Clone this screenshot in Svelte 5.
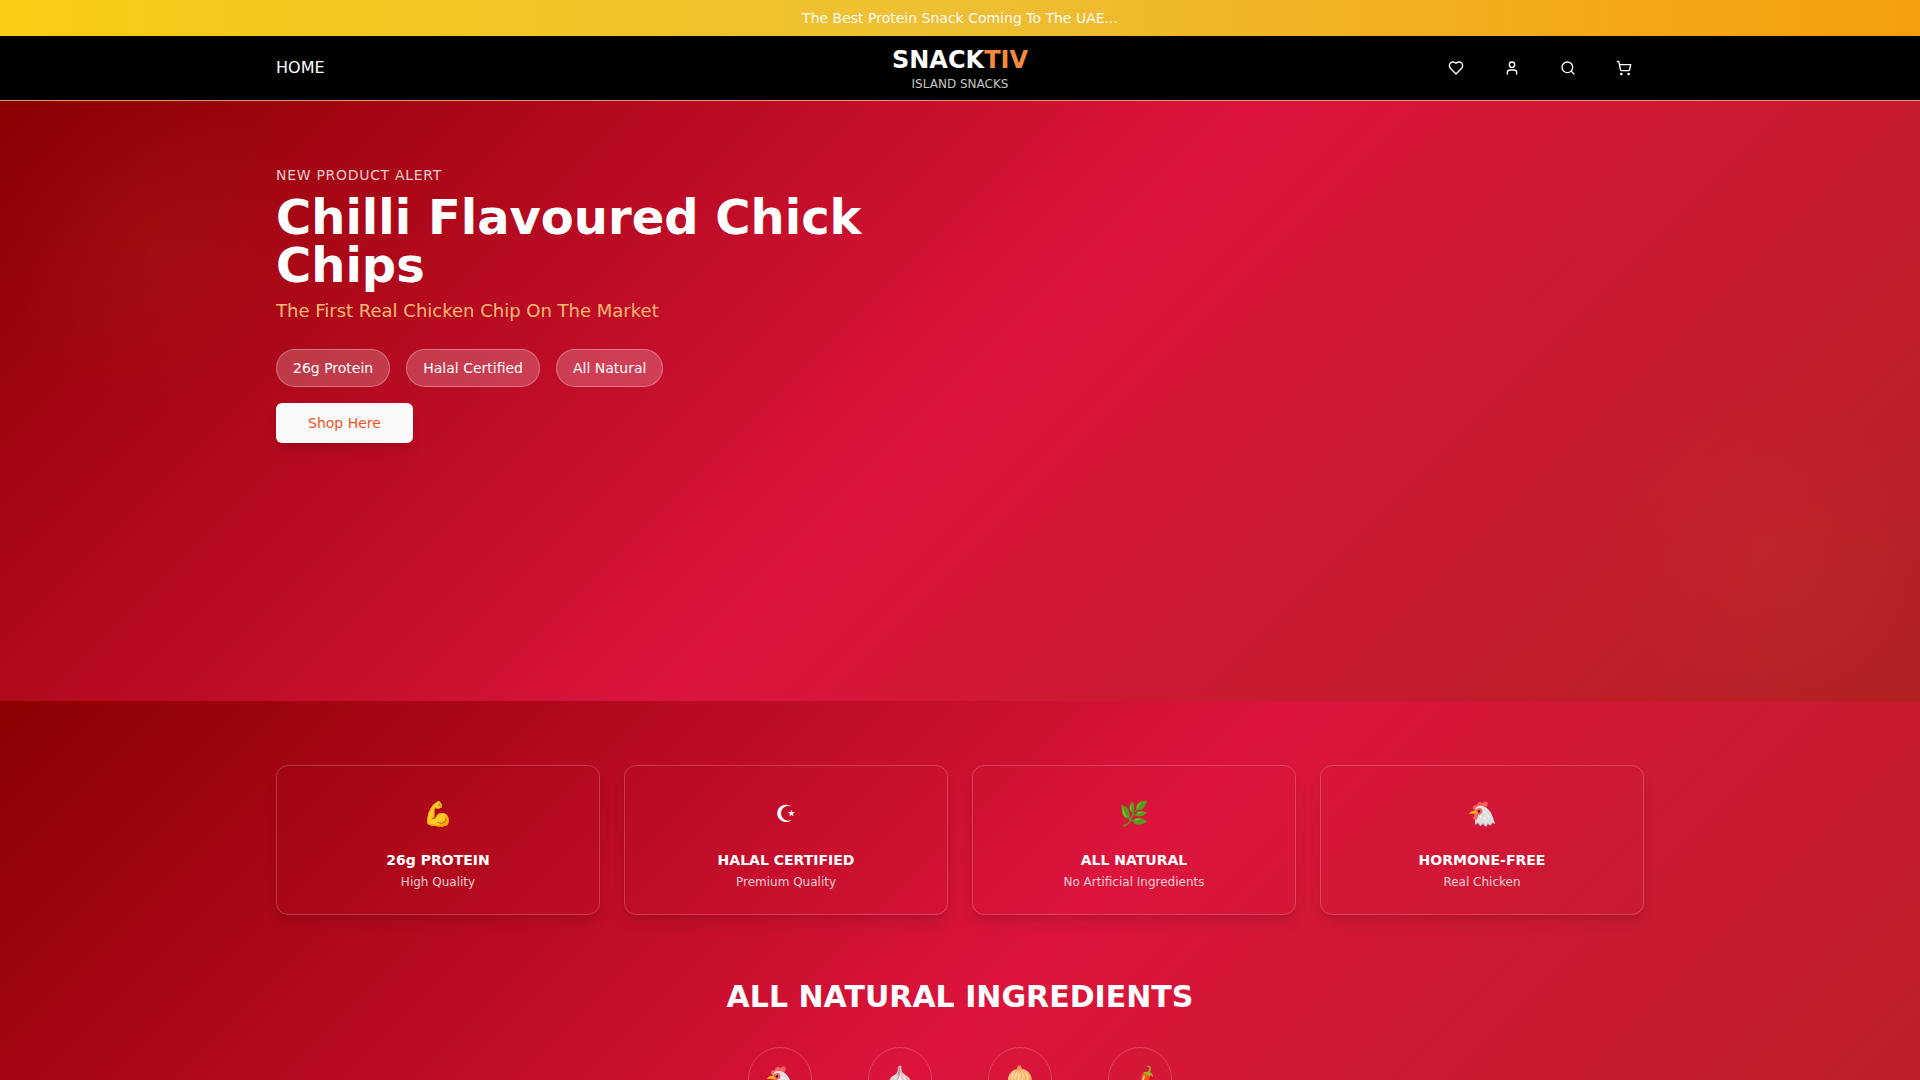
<script lang="ts">
    type Card = {
        icon: string;
        title: string;
        text: string;
    };

    const badges: string[] = ['26g Protein', 'Halal Certified', 'All Natural'];

    const features: Card[] = [
        { icon: '💪', title: '26g PROTEIN', text: 'High Quality' },
        { icon: '☪', title: 'HALAL CERTIFIED', text: 'Premium Quality' },
        { icon: '🌿', title: 'ALL NATURAL', text: 'No Artificial Ingredients' },
        { icon: '🐔', title: 'HORMONE-FREE', text: 'Real Chicken' }
    ];

    const ingredients: string[] = ['🐔', '🧄', '🧅', '🌶️'];
</script>

<div class="page">
    <div class="announcement">The Best Protein Snack Coming To The UAE...</div>

    <header class="header">
        <div class="container header-row">
            <nav>
                <a class="nav-link" href="/">HOME</a>
            </nav>

            <a class="logo" href="/">
                <span class="logo-name">SNACK<span class="logo-accent">TIV</span></span>
                <span class="logo-tag">ISLAND SNACKS</span>
            </a>

            <div class="actions">
                <button class="icon-button" type="button" aria-label="Wishlist">
                    <svg viewBox="0 0 24 24">
                        <path d="M19 14c1.49-1.46 3-3.21 3-5.5A5.5 5.5 0 0 0 16.5 3c-1.76 0-3 .5-4.5 2-1.5-1.5-2.74-2-4.5-2A5.5 5.5 0 0 0 2 8.5c0 2.3 1.5 4.05 3 5.5l7 7Z" />
                    </svg>
                </button>
                <button class="icon-button" type="button" aria-label="Account">
                    <svg viewBox="0 0 24 24">
                        <path d="M19 21v-2a4 4 0 0 0-4-4H9a4 4 0 0 0-4 4v2" />
                        <circle cx="12" cy="7" r="4" />
                    </svg>
                </button>
                <button class="icon-button" type="button" aria-label="Search">
                    <svg viewBox="0 0 24 24">
                        <circle cx="11" cy="11" r="8" />
                        <path d="m21 21-4.3-4.3" />
                    </svg>
                </button>
                <button class="icon-button" type="button" aria-label="Cart">
                    <svg viewBox="0 0 24 24">
                        <circle cx="8" cy="21" r="1" />
                        <circle cx="19" cy="21" r="1" />
                        <path d="M2.05 2.05h2l2.66 12.42a2 2 0 0 0 2 1.58h9.78a2 2 0 0 0 1.95-1.57l1.65-7.43H5.12" />
                    </svg>
                </button>
            </div>
        </div>
    </header>

    <main>
        <section class="hero">
            <div class="container">
                <div class="hero-content">
                    <p class="eyebrow">NEW PRODUCT ALERT</p>
                    <h1>Chilli Flavoured Chick Chips</h1>
                    <p class="subtitle">The First Real Chicken Chip On The Market</p>
                    <div class="badges">
                        {#each badges as badge}
                            <span class="badge">{badge}</span>
                        {/each}
                    </div>
                    <button class="shop-button" type="button">Shop Here</button>
                </div>
            </div>
        </section>

        <section class="features">
            <div class="container">
                <div class="feature-grid">
                    {#each features as feature}
                        <div class="feature-card">
                            <div class="feature-icon">{feature.icon}</div>
                            <h3>{feature.title}</h3>
                            <p>{feature.text}</p>
                        </div>
                    {/each}
                </div>

                <h2>ALL NATURAL INGREDIENTS</h2>
                <div class="ingredient-grid">
                    {#each ingredients as ingredient}
                        <div class="ingredient">{ingredient}</div>
                    {/each}
                </div>
            </div>
        </section>
    </main>
</div>

<style>
    :global(body) {
        margin: 0;
        background: #8b0000;
    }

    .page {
        --spice: linear-gradient(135deg, #8b0000 0%, #dc143c 50%, #b22222 100%);
        color: #fff;
        font-family: "DejaVu Sans", sans-serif;
        font-size: 16px;
        line-height: 24px;
    }

    .page :is(h1, h2, h3, p) {
        margin: 0;
    }

    button {
        font-family: inherit;
        border: 0;
        cursor: pointer;
    }

    .container {
        box-sizing: border-box;
        max-width: 1400px;
        margin: 0 auto;
        padding: 0 16px;
    }

    .announcement {
        padding: 8px 16px;
        background: linear-gradient(90deg, #facc15, #eebf33, #f59e0b);
        color: #fafafa;
        font-size: 14px;
        line-height: 20px;
        text-align: center;
    }

    /* Header */
    .header {
        background: #000;
        border-bottom: 1px solid #dc9a72;
    }

    .header-row {
        display: grid;
        grid-template-columns: 1fr auto 1fr;
        align-items: center;
        min-height: 64px;
    }

    .nav-link {
        color: #fff;
        text-decoration: none;
    }

    .logo {
        display: flex;
        flex-direction: column;
        align-items: center;
        color: #fff;
        text-decoration: none;
    }

    .logo-name {
        font-size: 24px;
        font-weight: bold;
        line-height: 32px;
    }

    .logo-accent {
        color: #f58a3c;
    }

    .logo-tag {
        color: #c4c4c4;
        font-size: 12px;
        line-height: 16px;
    }

    .actions {
        display: flex;
        justify-content: flex-end;
        gap: 16px;
    }

    .icon-button {
        display: flex;
        align-items: center;
        justify-content: center;
        width: 40px;
        height: 40px;
        padding: 0;
        background: transparent;
        color: #fff;
    }

    .icon-button svg {
        width: 16px;
        height: 16px;
        fill: none;
        stroke: currentColor;
        stroke-width: 2;
        stroke-linecap: round;
        stroke-linejoin: round;
    }

    /* Hero */
    .hero {
        box-sizing: border-box;
        min-height: 600px;
        padding: 64px 0;
        background:
            radial-gradient(circle at 160px 150px, rgba(249, 160, 60, 0.05), transparent 160px),
            radial-gradient(circle at calc(100% - 160px) calc(100% - 154px), rgba(249, 160, 60, 0.05), transparent 160px),
            var(--spice);
    }

    .hero-content {
        display: flex;
        flex-direction: column;
        align-items: flex-start;
        max-width: 660px;
    }

    .eyebrow {
        color: rgba(255, 255, 255, 0.8);
        font-size: 14px;
        line-height: 20px;
        letter-spacing: 0.05em;
    }

    h1 {
        padding: 8px 0;
        font-size: 48px;
        line-height: 48px;
    }

    .subtitle {
        color: #fdba74;
        font-size: 18px;
        line-height: 28px;
    }

    .badges {
        display: flex;
        flex-wrap: wrap;
        gap: 16px;
        padding: 24px 0 16px;
    }

    .badge {
        padding: 8px 16px;
        background: rgba(255, 255, 255, 0.2);
        border: 1px solid rgba(255, 255, 255, 0.3);
        border-radius: 20px;
        font-size: 14px;
        line-height: 20px;
    }

    .shop-button {
        padding: 10px 32px;
        background: #fafafa;
        border-radius: 6px;
        box-shadow: 0 10px 15px -3px rgba(0, 0, 0, 0.1), 0 4px 6px -4px rgba(0, 0, 0, 0.1);
        color: #f0541e;
        font-size: 14px;
        line-height: 20px;
    }

    /* Features and ingredients */
    .features {
        padding: 64px 0 240px;
        background: var(--spice);
        text-align: center;
    }

    .feature-grid {
        display: grid;
        grid-template-columns: repeat(4, 1fr);
        gap: 24px;
    }

    .feature-card {
        padding: 24px;
        border: 1px solid rgba(255, 255, 255, 0.2);
        border-radius: 12px;
        box-shadow: 0 10px 15px -3px rgba(0, 0, 0, 0.1), 0 4px 6px -4px rgba(0, 0, 0, 0.1);
    }

    .feature-icon {
        margin-bottom: 12px;
        font-size: 24px;
        line-height: 48px;
    }

    h3 {
        font-size: 14px;
        line-height: 20px;
    }

    .feature-card p {
        padding-top: 4px;
        color: rgba(255, 255, 255, 0.8);
        font-size: 12px;
        line-height: 16px;
    }

    h2 {
        padding: 64px 0 32px;
        font-size: 30px;
        line-height: 36px;
    }

    .ingredient-grid {
        display: grid;
        grid-template-columns: repeat(4, 1fr);
        gap: 32px;
        justify-items: center;
        max-width: 448px;
        margin: 0 auto;
    }

    .ingredient {
        box-sizing: border-box;
        display: flex;
        align-items: center;
        justify-content: center;
        width: 64px;
        height: 64px;
        border: 1px solid rgba(255, 255, 255, 0.2);
        border-radius: 50%;
        font-size: 24px;
        line-height: 32px;
    }
</style>
